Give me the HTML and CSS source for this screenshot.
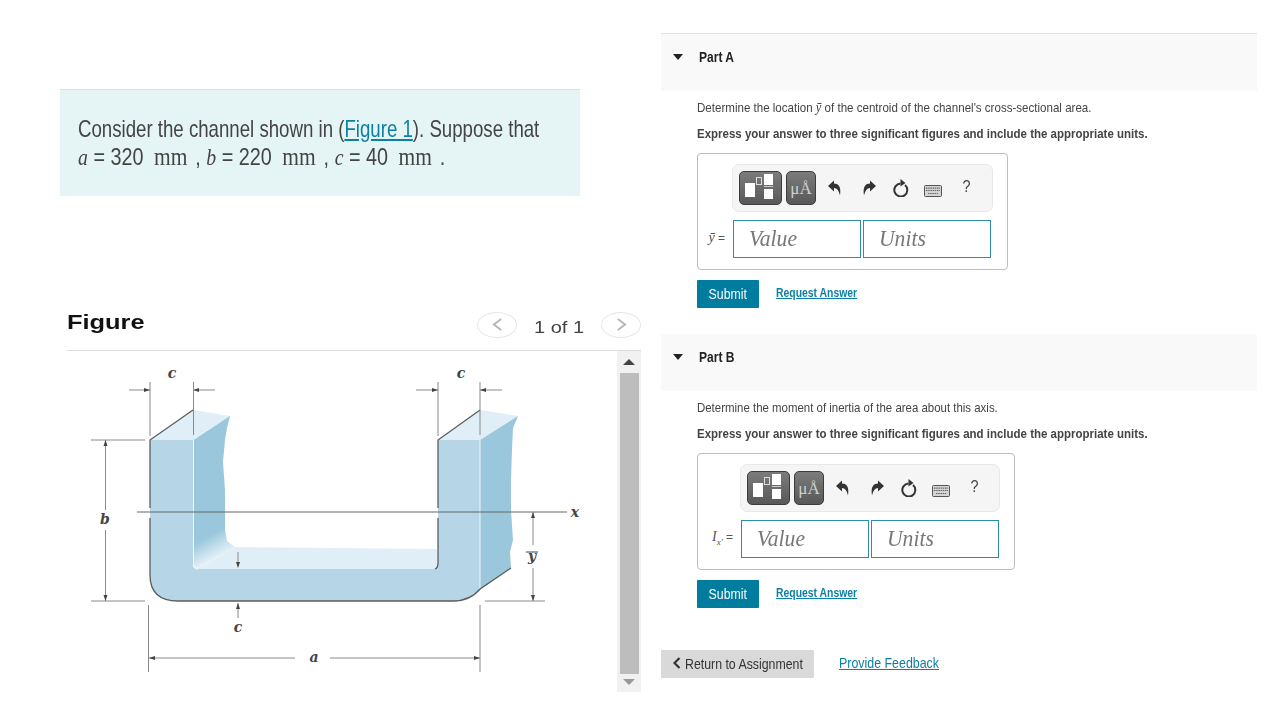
FILE: index.html
```html
<!DOCTYPE html>
<html lang="en">
<head>
<meta charset="utf-8">
<title>Channel centroid</title>
<link rel="stylesheet" href="styles.css">
</head>
<body>
<main class="page">
  <section class="left">
    <div class="prompt">
      <p class="prompt-line">Consider the channel shown in (<a href="#">Figure 1</a>). Suppose that</p>
      <p class="prompt-line prompt-math"><i class="m">a</i> = 320 <span class="u">mm</span> , <i class="m">b</i> = 220 <span class="u">mm</span> , <i class="m">c</i> = 40 <span class="u">mm</span> .</p>
    </div>
    <div class="figure">
      <header class="figure-head">
        <h2 class="figure-title">Figure</h2>
        <div class="pager">
          <span class="pager-btn">
            <svg width="11" height="13" viewBox="0 0 12 14"><path d="M10 1 2 7l8 6" fill="none" stroke="#b5b5b5" stroke-width="2"/></svg>
          </span>
          <span class="pager-text"><span>1 of 1</span></span>
          <span class="pager-btn">
            <svg width="11" height="13" viewBox="0 0 12 14"><path d="M2 1l8 6-8 6" fill="none" stroke="#b5b5b5" stroke-width="2"/></svg>
          </span>
        </div>
      </header>
      <div class="figure-body">
        <svg class="drawing" width="550" height="341" viewBox="67 351 550 341">
          <defs>
            <linearGradient id="fade" gradientUnits="userSpaceOnUse" x1="216" y1="558" x2="205" y2="538">
              <stop offset="0" stop-color="#e4f1f8"/>
              <stop offset="1" stop-color="#9ac7dc"/>
            </linearGradient>
          </defs>
          <g class="shape">
            <path fill="#e0eff7" d="M150 440 193 410 230 416 193.500 440ZM438 440 480 410 518 416 480 440ZM197 569 235 547 437 549V569Z"/>
            <path fill="url(#fade)" d="M193.500 440 230 416 227 428 225 440 223 462 225 490 225 530 227 541 235 547 197 569 193.500 565Z"/>
            <path fill="#9ac7dc" d="M480 440 518 416 513 428 512 450 511 480 511 510 513 540 510 552 511 568 480 590Z"/>
            <path fill="#b6d6e7" d="M150 440H193.500V565Q193.500 569 198 569H433Q438 569 438 563V440H480V588Q470 601 453 601H178Q150 601 150 575Z"/>
            <path fill="none" stroke="#eef7fb" stroke-width="1" d="M193.500 440V565Q193.500 569 198 569M480 440V588"/>
          </g>
          <g class="ink" fill="none" stroke="#5c5c5c" stroke-width="1.300">
            <path d="M150 575V518M150 508V440L193 410M438 508V440L480 410M438 518V563Q438 568 435 569"/>
            <path d="M150 575Q150 601 178 601H453Q470 601 480 589L511 568"/>
          </g>
          <g class="ink" fill="none" stroke="#8a8a8a" stroke-width="1">
            <path d="M150 382V436M193.500 382V435M129 390H150M193.500 390H215M438 382V436M480 382V435M416 390H438M480 390H502"/>
            <path d="M91 440H145M91 601H145M105.500 440V510M105.500 530V601"/>
            <path d="M238 552V566M238 603V618"/>
            <path d="M148.500 605V672M480 605V672M149 658H295M330 658H480"/>
            <path d="M533 512V545M533 568V601M485 601H545"/>
          </g>
          <path class="ink" d="M137 512H567" fill="none" stroke="#666" stroke-width="1.200"/>
          <g fill="#444">
            <path d="M150 390 144 388V392ZM193.500 390 199 388V392ZM438 390 432 388V392ZM480 390 486 388V392Z"/>
            <path d="M105.500 440 103.500 446H107.500ZM105.500 601 103.500 595H107.500Z"/>
            <path d="M238 568 236 562H240ZM238 603 236 609H240Z"/>
            <path d="M149 658 155 656V660ZM480 658 474 656V660Z"/>
            <path d="M533 512 531 518H535ZM533 601 531 595H535Z"/>
          </g>
          <g class="labels">
            <text x="172" y="378">c</text>
            <text x="461" y="378">c</text>
            <text x="105" y="524">b</text>
            <text x="238" y="632">c</text>
            <text x="314" y="662">a</text>
            <text x="575" y="517">x</text>
            <text x="532" y="561">y</text>
          </g>
          <path d="M526 552H538" stroke="#444" stroke-width="1"/>
        </svg>
        <div class="scrollbar">
          <svg class="scroll-arrow" width="12" height="6" viewBox="0 0 12 6"><path d="M6 0 12 6H0Z" fill="#444"/></svg>
          <div class="scroll-thumb"></div>
          <svg class="scroll-arrow" width="12" height="6" viewBox="0 0 12 6"><path d="M0 0H12L6 6Z" fill="#999"/></svg>
        </div>
      </div>
    </div>
  </section>

  <section class="right">
    <article class="part">
      <header class="part-head part-head-first">
        <svg class="caret" width="10" height="6" viewBox="0 0 10 6"><path d="M0 0H10L5 6Z" fill="#222"/></svg>
        <h3 class="part-title">Part A</h3>
      </header>
      <div class="part-body">
        <p class="question">Determine the location <i class="ybar">ȳ</i> of the centroid of the channel's cross-sectional area.</p>
        <p class="instruction">Express your answer to three significant figures and include the appropriate units.</p>
        <div class="answer answer-a">
          <div class="toolbar">
            <span class="tool tool-matrix"><i class="mx mx-a"></i><i class="mx mx-b"></i><i class="mx mx-c"></i><i class="mx mx-e"></i><i class="mx mx-d"></i></span>
            <span class="tool tool-unit">μÅ</span>
            <svg class="icon" width="14" height="16" viewBox="0 0 14 16"><path d="M0 6 6 .5V3.500C10 3.500 13.500 6 12 15.500 11 11 9 8 6 8V11.500Z" fill="#333"/></svg>
            <svg class="icon" width="14" height="16" viewBox="0 0 14 16"><path d="M14 6 8 .5V3.500C4 3.500 .5 6 2 15.500 3 11 5 8 8 8V11.500Z" fill="#333"/></svg>
            <svg class="icon" width="16" height="18" viewBox="0 0 16 18"><path d="M12 6A6.500 6.500 0 1 1 7.500 4.500" fill="none" stroke="#333" stroke-width="2"/><path d="M7.500 0 12.500 4 7.500 7.500Z" fill="#333"/></svg>
            <svg class="icon" width="18" height="12" viewBox="0 0 18 12"><rect x=".5" y=".5" width="17" height="11" rx="1" fill="#d4d4d4" stroke="#555"/><path d="M2 3.200H16M2 5.500H16M4 8.500H14" stroke="#666" stroke-width="1.200" stroke-dasharray="1.500 .7"/></svg>
            <span class="help">?</span>
          </div>
          <div class="label"><i class="ybar">ȳ</i> =</div>
          <div class="fields">
            <div class="field"><span>Value</span></div>
            <div class="field"><span>Units</span></div>
          </div>
        </div>
        <div class="actions">
          <button class="submit" type="button"><span>Submit</span></button>
          <a class="request" href="#">Request Answer</a>
        </div>
      </div>
    </article>

    <article class="part">
      <header class="part-head">
        <svg class="caret" width="10" height="6" viewBox="0 0 10 6"><path d="M0 0H10L5 6Z" fill="#222"/></svg>
        <h3 class="part-title">Part B</h3>
      </header>
      <div class="part-body">
        <p class="question question-b">Determine the moment of inertia of the area about this axis.</p>
        <p class="instruction">Express your answer to three significant figures and include the appropriate units.</p>
        <div class="answer answer-b">
          <div class="toolbar">
            <span class="tool tool-matrix"><i class="mx mx-a"></i><i class="mx mx-b"></i><i class="mx mx-c"></i><i class="mx mx-e"></i><i class="mx mx-d"></i></span>
            <span class="tool tool-unit">μÅ</span>
            <svg class="icon" width="14" height="16" viewBox="0 0 14 16"><path d="M0 6 6 .5V3.500C10 3.500 13.500 6 12 15.500 11 11 9 8 6 8V11.500Z" fill="#333"/></svg>
            <svg class="icon" width="14" height="16" viewBox="0 0 14 16"><path d="M14 6 8 .5V3.500C4 3.500 .5 6 2 15.500 3 11 5 8 8 8V11.500Z" fill="#333"/></svg>
            <svg class="icon" width="16" height="18" viewBox="0 0 16 18"><path d="M12 6A6.500 6.500 0 1 1 7.500 4.500" fill="none" stroke="#333" stroke-width="2"/><path d="M7.500 0 12.500 4 7.500 7.500Z" fill="#333"/></svg>
            <svg class="icon" width="18" height="12" viewBox="0 0 18 12"><rect x=".5" y=".5" width="17" height="11" rx="1" fill="#d4d4d4" stroke="#555"/><path d="M2 3.200H16M2 5.500H16M4 8.500H14" stroke="#666" stroke-width="1.200" stroke-dasharray="1.500 .7"/></svg>
            <span class="help">?</span>
          </div>
          <div class="label"><i class="m-label">I<sub>x′</sub></i> =</div>
          <div class="fields">
            <div class="field"><span>Value</span></div>
            <div class="field"><span>Units</span></div>
          </div>
        </div>
        <div class="actions">
          <button class="submit" type="button"><span>Submit</span></button>
          <a class="request" href="#">Request Answer</a>
        </div>
      </div>
    </article>

    <footer class="page-foot">
      <button class="back" type="button">
        <svg class="back-icon" width="8" height="12" viewBox="0 0 8 12"><path d="M6.500 1 1.500 6l5 5" fill="none" stroke="#333" stroke-width="2.200"/></svg>
        <span>Return to Assignment</span>
      </button>
      <a class="feedback" href="#">Provide Feedback</a>
    </footer>
  </section>
</main>
</body>
</html>
```
FILE: styles.css
```css
* { box-sizing: border-box; }
html, body { margin: 0; padding: 0; background: #fff; }
body { font-family: "Liberation Sans", Arial, sans-serif; color: #333; overflow: hidden; }
p, h2, h3 { margin: 0; font-weight: normal; }
a { color: #0d7fa3; }

.page { display: flex; width: 1268px; height: 708px; }

/* Left column */
.left { width: 661px; padding: 89px 0 0 60px; }
.prompt {
  width: 520px; height: 107px; padding: 25px 18px 0;
  background: #e5f5f5; border-top: 1px solid #d5e4e4;
}
.prompt-line {
  font-size: 24px; line-height: 28px; color: #444; white-space: nowrap;
  transform: scaleX(.777); transform-origin: 0 50%;
}
.prompt-math { transform: scaleX(.825); }
.prompt-line a { color: #0d7fa3; }
.m { font-family: "Liberation Serif", serif; font-style: italic; }
.u { font-family: "Liberation Serif", serif; margin: 0 3px 0 6px; font-size: 26px; }

.figure { width: 581px; margin: 115px 0 0 7px; }
.figure-head {
  display: flex; justify-content: space-between; align-items: center;
  width: 574px; height: 40px; padding-bottom: 12px; border-bottom: 1px solid #ddd;
}
.figure-title {
  margin-bottom: 4px; font-size: 20px; font-weight: bold; color: #111;
  transform: scaleX(1.27); transform-origin: 0 50%;
}
.pager { display: flex; align-items: center; }
.pager-btn {
  display: flex; align-items: center; justify-content: center;
  width: 40px; height: 26px; border: 1px solid #e6e6e6; border-radius: 50%;
}
.pager-text {
  width: 84px; text-align: center; font-size: 16px; color: #444; padding-top: 7px;
}
.pager-text span { display: inline-block; transform: scaleX(1.25); }
.figure-body { display: flex; width: 574px; }
.drawing { display: block; flex: none; }
.shape { filter: blur(.4px); }
.ink { filter: blur(.25px); }
.labels text {
  font-family: "DejaVu Serif", serif; font-size: 14px; font-style: italic; font-weight: bold;
  fill: #444; text-anchor: middle;
}
.scrollbar {
  display: flex; flex-direction: column; align-items: center;
  width: 24px; height: 341px; padding-top: 8px; background: #f1f1f1;
}
.scroll-thumb { width: 19px; height: 301px; margin: 8px 0 5px; background: #bdbdbd; }
.scroll-arrow { display: block; flex: none; }

/* Right column */
.right { width: 596px; padding-top: 33px; }
.part-head {
  display: flex; align-items: center; height: 57px; padding: 0 0 11px 12px; background: #f9f9f9;
}
.part-head-first { height: 58px; border-top: 1px solid #e2e2e2; }
.caret { flex: none; }
.part-title {
  margin-left: 16px; font-size: 14px; font-weight: bold; color: #222;
  transform: scaleX(.86); transform-origin: 0 50%;
}
.part-body { padding: 0 0 26px 36px; }
.question {
  margin-top: 10px; font-size: 13px; line-height: 14px; color: #444; white-space: nowrap;
  transform: scaleX(.889); transform-origin: 0 50%;
}
.question-b { transform: scaleX(.88); }
.instruction {
  margin-top: 12px; font-size: 13px; line-height: 14px; font-weight: bold; color: #444; white-space: nowrap;
  transform: scaleX(.8835); transform-origin: 0 50%;
}
.ybar { font-family: "Liberation Serif", serif; font-style: italic; font-size: 14px; }
.answer {
  display: inline-grid; row-gap: 9px; align-items: center;
  height: 117px; margin-top: 12px; padding: 10px 14px 11px 0;
  border: 1px solid #bcbcbc; border-radius: 4px; vertical-align: top;
}
.answer-a { width: 311px; grid-template-columns: 34px 261px; }
.answer-b { width: 318px; grid-template-columns: 42px 260px; }
.toolbar {
  grid-column: 2; grid-row: 1;
  display: flex; align-items: center; height: 48px; padding: 0 0 0 6px;
  background: #f5f5f5; border: 1px solid #e8e8e8; border-radius: 7px;
}
.tool {
  position: relative; display: block; flex: none; height: 34px;
  background: linear-gradient(#7c7c7c, #585858); border: 1px solid #3c3c3c; border-radius: 5px;
}
.tool-matrix { width: 43px; }
.tool-unit {
  width: 30px; margin-left: 4px; padding-top: 7px; text-align: center;
  font-family: "Liberation Serif", serif; font-size: 17px; line-height: 20px; color: #d0d0d0;
}
.mx { position: absolute; display: block; background: #fff; }
.mx-a { left: 5px; top: 11px; width: 10px; height: 14px; }
.mx-b { left: 16px; top: 5px; width: 6px; height: 8px; background: none; border: 1px solid #ddd; }
.mx-c { left: 24px; top: 2px; width: 9px; height: 11px; }
.mx-e { left: 24px; top: 14px; width: 9px; height: 1px; background: #ccc; }
.mx-d { left: 24px; top: 17px; width: 9px; height: 10px; }
.icon { flex: none; display: block; }
.toolbar .icon:nth-of-type(1) { margin-left: 12px; }
.toolbar .icon:nth-of-type(2) { margin-left: 20px; }
.toolbar .icon:nth-of-type(3) { margin-left: 17px; }
.toolbar .icon:nth-of-type(4) { margin-left: 15px; margin-top: 5px; }
.help { margin-left: 20px; font-size: 16px; color: #444; transform: scaleX(.9); margin-top: -2px; }
.label {
  grid-column: 1; grid-row: 2; text-align: right; padding: 0 7px 3px 0; font-size: 12px; color: #555; white-space: nowrap;
}
.m-label { font-family: "Liberation Serif", serif; font-size: 14px; }
.m-label sub { font-size: 9px; }
.fields { grid-column: 2; grid-row: 2; display: flex; gap: 2px; padding-left: 1px; }
.field {
  width: 128px; height: 38px; margin-top: -1px; padding-left: 15px;
  border: 1px solid #2c8cab;
  font-family: "Liberation Serif", serif; font-style: italic; font-size: 24px; line-height: 35px; color: #777;
}
.field span { display: inline-block; transform: scaleX(.9); transform-origin: 0 50%; }
.actions { display: flex; align-items: center; margin-top: 10px; }
.submit {
  width: 62px; height: 28px; padding: 0; border: none; border-radius: 1px;
  background: #007c9f; color: #fff; font: 14px "Liberation Sans", Arial, sans-serif;
}
.submit span { display: inline-block; transform: scaleX(.88); }
.request {
  margin: -4px 0 0 17px; font-size: 13px; font-weight: bold; white-space: nowrap;
  transform: scaleX(.8); transform-origin: 0 50%;
}
.page-foot { display: flex; align-items: center; margin-top: 16px; }
.back {
  display: flex; align-items: center; gap: 4px;
  width: 153px; height: 28px; padding: 0 0 2px 12px; border: none; border-radius: 1px;
  background: #d9d9d9; color: #333; font: 15px "Liberation Sans", Arial, sans-serif; white-space: nowrap;
}
.back-icon { flex: none; }
.back span { display: block; transform: scaleX(.822); transform-origin: 0 50%; }
.feedback {
  margin: -4px 0 0 25px; font-size: 15px; white-space: nowrap;
  transform: scaleX(.827); transform-origin: 0 50%;
}
```
